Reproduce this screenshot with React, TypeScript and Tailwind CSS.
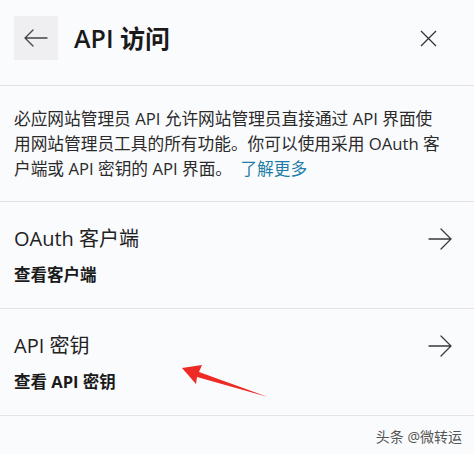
import React from "react";

const font = { fontFamily: '"Open Sans", "Noto Sans CJK SC", sans-serif' };

function ArrowRight() {
  return (
    <svg width="24" height="22" viewBox="0 0 24 22" fill="none" stroke="#3a3a3a" strokeWidth="1.3" strokeLinecap="round">
      <path d="M1 11h22M13 1l10 10-10 10" />
    </svg>
  );
}

function Row({ title, sub }: { title: string; sub: string }) {
  return (
    <div className="flex items-center justify-between pl-[14px] pr-[22px] pt-[23px] pb-[21px] border-b border-[#e4e4e6]">
      <div className="flex flex-col gap-[10px]">
        <div className="text-[20px] leading-[28px] text-[#222]">{title}</div>
        <div className="text-[16.5px] leading-[24px] font-bold text-[#1a1a1a]">{sub}</div>
      </div>
      <div className="-mt-[34px]">
        <ArrowRight />
      </div>
    </div>
  );
}

export default function App() {
  return (
    <div className="relative w-[474px] h-[454px] bg-[#fafbfd] overflow-hidden" style={font}>
      <div className="flex items-center justify-between pl-[14px] pr-[37px] pt-[16px] pb-[25px] border-b border-[#e4e4e6]">
        <div className="flex items-center gap-[16px]">
          <div className="w-[44px] h-[44px] bg-[#efeff1] flex items-center justify-center">
            <svg width="24" height="18" viewBox="0 0 24 18" fill="none" stroke="#444" strokeWidth="1.3" strokeLinecap="round">
              <path d="M23 9H1M9 1L1 9l8 8" />
            </svg>
          </div>
          <div className="text-[25px] leading-[32px] font-semibold text-[#1a1a1a]">API 访问</div>
        </div>
        <svg width="17" height="17" viewBox="0 0 17 17" fill="none" stroke="#333" strokeWidth="1.3">
          <path d="M1 1l15 15M16 1L1 16" />
        </svg>
      </div>
      <div className="pl-[14px] pr-[10px] pt-[20px] pb-[20px] border-b border-[#e4e4e6] text-[16.7px] leading-[25px] text-[#2a2a2a] whitespace-nowrap">
        <div>必应网站管理员 API 允许网站管理员直接通过 API 界面使</div>
        <div>用网站管理员工具的所有功能。你可以使用采用 OAuth 客</div>
        <div>
          户端或 API 密钥的 API 界面。 <span className="text-[#1f7ea8] ml-[4px]">了解更多</span>
        </div>
      </div>
      <Row title="OAuth 客户端" sub="查看客户端" />
      <Row title="API 密钥" sub="查看 API 密钥" />
      <div className="flex justify-end pr-[12px] pt-[10px] text-[14px] text-[#555]">头条 @微转运</div>
      <svg className="absolute left-[178px] top-[360px]" width="95" height="42" viewBox="0 0 95 42">
        <path d="M4 8 L24 5 L21 12 L90 37 L19 17 L18 24 Z" fill="#ee2a24" />
      </svg>
    </div>
  );
}
